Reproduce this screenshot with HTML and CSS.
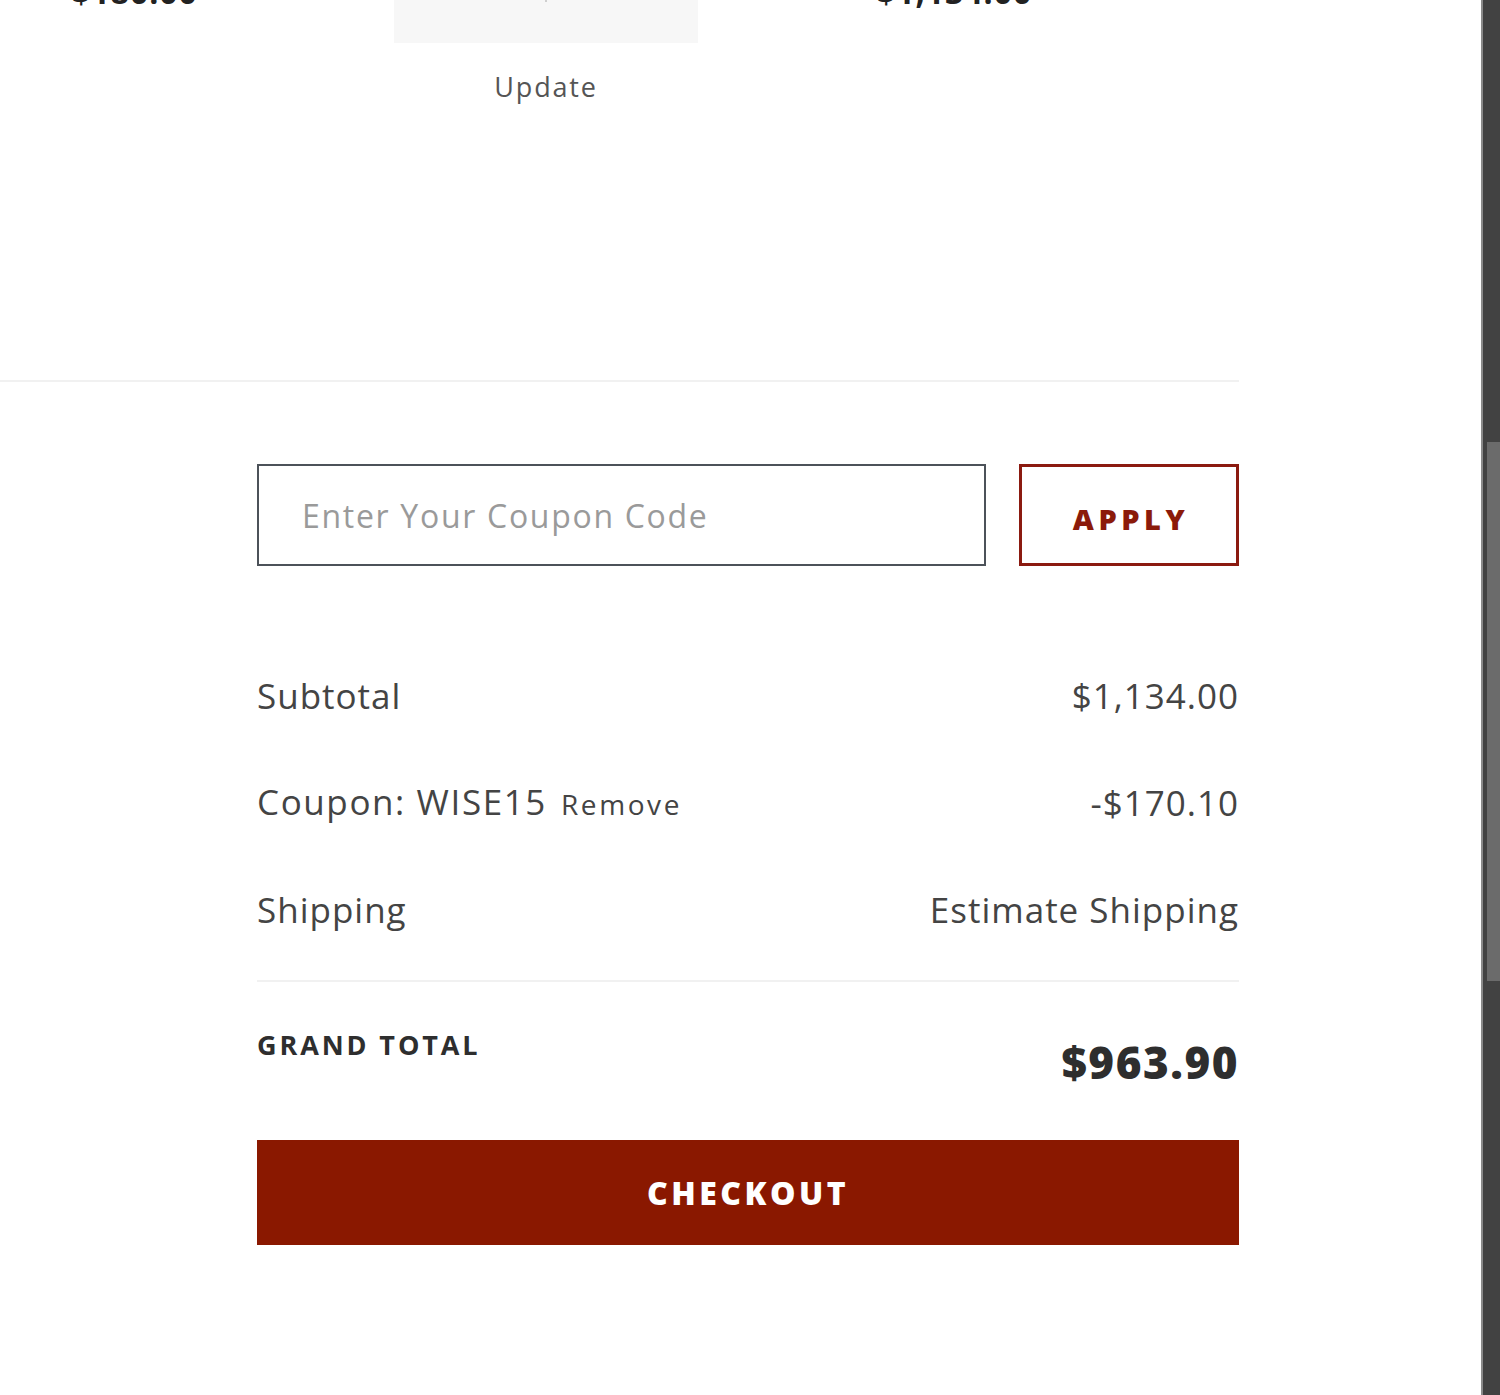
FILE: index.html
```html
<!DOCTYPE html>
<html lang="en">
<head>
<meta charset="utf-8">
<title>Cart</title>
<link rel="stylesheet" href="styles.css">
</head>
<body>
<div class="viewport">
  <main class="page">
    <section class="cart">
      <div class="item-row">
        <div class="price">$180.00</div>
        <div class="qty-col">
          <div class="qty-box"><span class="qty-tick"></span></div>
          <a class="update" href="#">Update</a>
        </div>
        <div class="line-total">$1,134.00</div>
      </div>
    </section>
    <section class="summary">
      <form class="coupon">
        <input class="coupon-input" type="text" placeholder="Enter Your Coupon Code">
        <button class="apply" type="button">APPLY</button>
      </form>
      <div class="totals">
        <div class="row"><span>Subtotal</span><span>$1,134.00</span></div>
        <div class="row"><span class="coupon-name">Coupon: WISE15<a class="remove" href="#">Remove</a></span><span>-$170.10</span></div>
        <div class="row"><span>Shipping</span><a class="estimate" href="#">Estimate Shipping</a></div>
      </div>
      <div class="grand">
        <span class="grand-label">GRAND TOTAL</span>
        <span class="grand-amount">$963.90</span>
      </div>
      <button class="checkout" type="button">CHECKOUT</button>
    </section>
  </main>
  <div class="scrollbar"><div class="thumb"></div></div>
</div>
</body>
</html>
```
FILE: styles.css
```css
* { box-sizing: border-box; }
html, body { margin: 0; padding: 0; background: #fff; }
body {
  font-family: "Open Sans", "Noto Sans", "Liberation Sans", sans-serif;
  color: #444;
  overflow: hidden;
}
.viewport {
  display: flex;
  width: 1500px;
  height: 1395px;
  overflow: hidden;
}
.page {
  flex: 1;
  overflow: hidden;
}
.scrollbar {
  width: 19px;
  background: #424242;
  border-left: 2px solid #8a8a8a;
  padding-left: 4px;
  padding-top: 442px;
}
.thumb {
  height: 539px;
  background: #6b6b6b;
}

.cart {
  display: flow-root;
  width: 1239px;
  height: 382px;
  border-bottom: 2px solid #f1f1f1;
}
.item-row {
  display: flex;
  margin-top: -50px;
  padding-left: 72px;
}
.price, .line-total {
  font-size: 32px;
  font-weight: 700;
  line-height: 40px;
  color: #222;
  padding-top: 22px;
  letter-spacing: 1px;
}
.price { width: 322px; }
.line-total { margin-left: 179px; }
.qty-col {
  width: 304px;
  display: flex;
  flex-direction: column;
  align-items: center;
}
.qty-box {
  width: 304px;
  height: 93px;
  background: #f7f7f7;
  display: flex;
  justify-content: center;
}
.qty-tick {
  width: 2px;
  height: 52px;
  background: #cfcfcf;
}
.update {
  margin-top: 27px;
  font-size: 27px;
  line-height: 34px;
  color: #555;
  text-decoration: none;
  letter-spacing: 1.8px;
}

.summary {
  margin-left: 257px;
  width: 982px;
  padding-top: 82px;
}
.coupon {
  display: flex;
  gap: 33px;
  margin: 0;
}
.coupon-input {
  width: 729px;
  height: 102px;
  border: 2px solid #4c5259;
  padding: 0 0 0 43px;
  font-family: inherit;
  font-size: 32px;
  color: #444;
  outline: none;
  border-radius: 0;
  letter-spacing: 1.7px;
}
.coupon-input::placeholder { color: #9a9a9a; letter-spacing: 1.7px; }
.apply {
  width: 220px;
  height: 102px;
  border: 3px solid #8b1a10;
  background: #fff;
  color: #8b1a0a;
  font-family: inherit;
  font-size: 29px;
  font-weight: 800;
  letter-spacing: 4.5px;
  padding: 6px 0 0 4px;
  border-radius: 0;
}
.totals {
  padding-top: 110px;
  padding-bottom: 50px;
  border-bottom: 2px solid #f1f1f1;
  display: flex;
  flex-direction: column;
  gap: 67px;
}
.row {
  display: flex;
  justify-content: space-between;
  align-items: center;
  height: 40px;
  font-size: 35px;
  line-height: 40px;
  color: #444;
  letter-spacing: 1px;
}
.coupon-name { letter-spacing: 1.6px; }
.remove {
  font-size: 28px;
  color: #444;
  text-decoration: none;
  margin-left: 14px;
  letter-spacing: 2.6px;
}
.estimate { color: #444; text-decoration: none; }
.grand {
  display: flex;
  justify-content: space-between;
  align-items: flex-start;
  padding-top: 46px;
}
.grand-label {
  font-size: 27px;
  font-weight: 700;
  letter-spacing: 2.9px;
  line-height: 34px;
  color: #2e2e2e;
}
.grand-amount {
  font-size: 44px;
  font-weight: 800;
  line-height: 50px;
  margin-top: 9px;
  color: #2e2e2e;
  letter-spacing: 1.5px;
}
.checkout {
  display: block;
  width: 982px;
  height: 105px;
  margin-top: 53px;
  border: 0;
  background: #8a1800;
  color: #fff;
  font-family: inherit;
  font-size: 32px;
  font-weight: 800;
  letter-spacing: 3.5px;
  border-radius: 0;
}
```
